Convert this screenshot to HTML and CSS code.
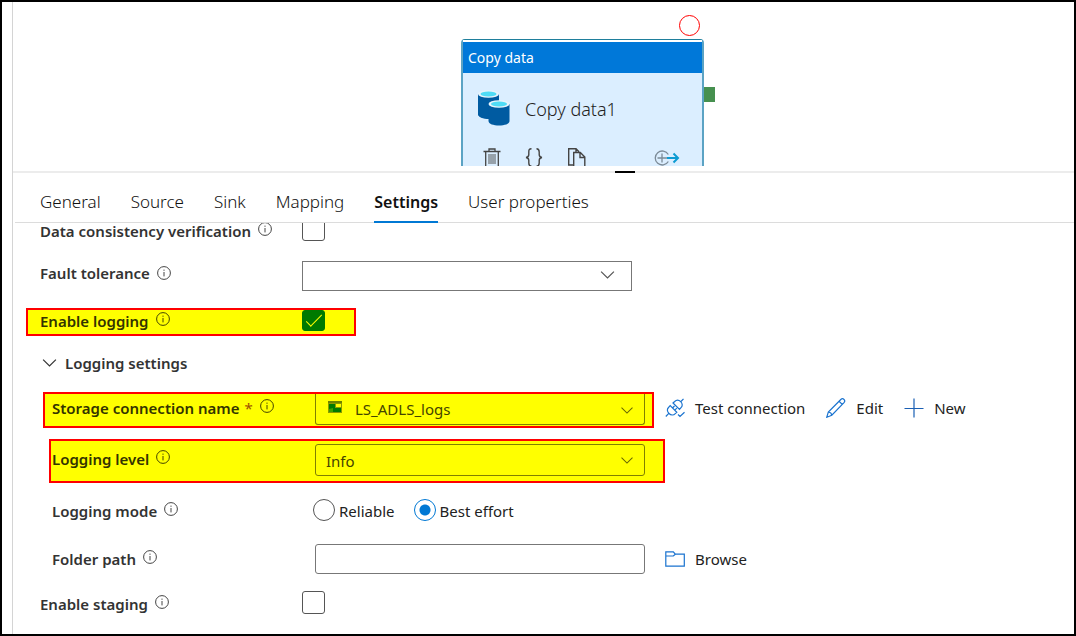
FILE: index.html
```html
<!DOCTYPE html>
<html lang="en">
<head>
<meta charset="utf-8">
<meta name="viewport" content="width=device-width, initial-scale=1">
<title>Copy data – Settings</title>
<link rel="stylesheet" href="styles.css">
</head>
<body>
<svg class="defs" aria-hidden="true">
  <symbol id="i-info" viewBox="0 0 14 14"><circle cx="7" cy="7" r="6.4" fill="none" stroke="currentColor"/><path d="M7 6v4.4M7 3.6v1.2" stroke="currentColor" fill="none"/></symbol>
  <symbol id="i-chevron" viewBox="0 0 14 8"><path d="M.6.6 7 7 13.400.6" fill="none" stroke="currentColor" stroke-width="1.2"/></symbol>
</svg>
<div class="frame">
  <main class="editor">
    <section class="canvas" aria-label="Pipeline canvas">
      <div class="node">
        <div class="node-type">Copy data</div>
        <div class="node-body">
          <svg class="node-icon" width="32" height="36" viewBox="0 0 32 36" aria-hidden="true">
            <path d="M0 4v20c0 3 5 5 11 5V4z" fill="#005ba1"/><path d="M0 4h21v9H11v15C5 28 0 27 0 24z" fill="#005ba1"/>
            <ellipse cx="10.500" cy="4" rx="10.500" ry="3.800" fill="#e8f4fb"/><ellipse cx="10.500" cy="4" rx="8" ry="2.500" fill="#50dcf5"/>
            <path d="M10.500 14v17c0 3 5 4.500 10.500 4.500S31.500 34 31.500 31V14z" fill="#005ba1"/>
            <ellipse cx="21" cy="14" rx="10.500" ry="3.800" fill="#e8f4fb"/><ellipse cx="21" cy="14" rx="8" ry="2.600" fill="#50dcf5"/>
          </svg>
          <span class="node-name">Copy data1</span>
        </div>
        <div class="node-tools">
          <button type="button" aria-label="Delete"><svg width="18" height="20" viewBox="0 0 18 20" fill="none" stroke="#444"><path stroke-width="1.300" d="M.5 3.500h17M6 3V1h6v2M2.700 3.500V19h12.600V3.500"/><path stroke-width=".9" d="M6 6v10M8 6v10M10 6v10M12 6v10"/></svg></button>
          <button type="button" aria-label="Code"><svg width="18" height="20" viewBox="0 0 18 20" fill="none" stroke="#444" stroke-width="1.400"><path d="M6.500.8C4 .8 3.800 2 3.800 4v2.500c0 2-1 2.800-2.800 3 1.800.2 2.800 1 2.800 3V15c0 2 .2 3.200 2.700 3.200M11.500.8c2.500 0 2.700 1.200 2.700 3.200v2.500c0 2 1 2.800 2.800 3-1.800.2-2.800 1-2.800 3V15c0 2-.2 3.200-2.700 3.200"/></svg></button>
          <button type="button" aria-label="Clone"><svg width="20" height="20" viewBox="0 0 20 20" fill="none" stroke="#444" stroke-width="1.400"><path d="M6 17H1.700V.8H9l3 3M6.700 19.500V4.500h6.600l4.500 4.500v10.500M13 4.500V9.500h5M9 .8V4"/></svg></button>
          <button type="button" class="tool-output" aria-label="Add output"><svg width="26" height="16" viewBox="0 0 26 16" fill="none"><path d="M14.300 4.500A7 7 0 1 0 14.300 11.500M3.500 8h9.500M8 3.500v9" stroke="#7b8a97" stroke-width="1.300"/><path d="M13 8h11M19.500 3.500 24 8l-4.500 4.500" stroke="#0d9bd2" stroke-width="2"/></svg></button>
        </div>
      </div>
      <span class="node-port"></span>
      <span class="node-status"></span>
    </section>
    <div class="splitter"><span class="splitter-handle"></span></div>
    <nav class="tabs">
      <a href="#general">General</a>
      <a href="#source">Source</a>
      <a href="#sink">Sink</a>
      <a href="#mapping">Mapping</a>
      <a href="#settings" class="active" aria-current="page">Settings</a>
      <a href="#user">User properties</a>
    </nav>
    <form class="settings">
      <div class="row row-consistency">
        <label class="name" for="consistency">Data consistency verification<svg class="info"><use href="#i-info"/></svg></label>
        <input class="check" type="checkbox" id="consistency">
      </div>
      <div class="row row-fault">
        <label class="name level" for="fault">Fault tolerance<svg class="info"><use href="#i-info"/></svg></label>
        <div class="select select-square"><select id="fault"><option></option></select><svg class="chevron"><use href="#i-chevron"/></svg></div>
      </div>
      <div class="row marked row-logging">
        <label class="name" for="logging">Enable logging<svg class="info"><use href="#i-info"/></svg></label>
        <input class="check" type="checkbox" id="logging" checked>
      </div>
      <button type="button" class="group" aria-expanded="true"><svg class="group-chevron"><use href="#i-chevron"/></svg>Logging settings</button>
      <div class="line">
        <div class="row marked row-storage">
          <label class="name" for="storage">Storage connection name <span class="required">*</span><svg class="info"><use href="#i-info"/></svg></label>
          <div class="select select-storage">
            <svg class="storage-icon" width="14" height="12" viewBox="0 0 14 12" aria-hidden="true"><path fill="#8c9a00" d="M0 0h14v12H0z"/><path fill="#6f8200" d="M0 0h14v2H0z"/><path fill="#007a00" d="M1 3h6v4H1zM1 7h12v4H1z"/><path fill="#ff0" d="M8 3h5v3H8z"/><path fill="#3da000" d="M1 8l4-1v4H1z"/></svg>
            <select id="storage"><option>LS_ADLS_logs</option></select><svg class="chevron"><use href="#i-chevron"/></svg>
          </div>
        </div>
        <div class="actions">
          <button type="button"><svg width="20" height="20" viewBox="0 0 20 20" fill="none" stroke="#1a73cf" stroke-width="1.200"><path d="M.8 18.500 4 15.200M15.500 4 18.500.8M4 15.500c-2-2-2.200-4.500-.3-6.300L5.200 7.700l6.600 6.600-1.500 1.300c-1.800 1.900-4.300 1.900-6.300-.1zM8 5l1.700-1.500c1.800-1.800 4.200-1.600 6 .2 1.900 1.900 2 4.300.3 6L14.500 11.400zM7.500 10l2-2M9.800 12.200l2-2M13 16.500l2 2 4.500-4.200"/></svg>Test connection</button>
          <button type="button"><svg width="20" height="20" viewBox="0 0 20 20" fill="none" stroke="#1a73cf" stroke-width="1.200"><path d="M.8 19.200 2.300 14 14.800 1.500c1-.9 2.300-.9 3.200 0s.9 2.200 0 3.200L5.800 17.200zM2.300 14c1.800.2 3.200 1.400 3.500 3.200M13 3.300l3.500 3.300"/></svg>Edit</button>
          <button type="button"><svg width="20" height="20" viewBox="0 0 20 20" fill="none" stroke="#1a5fb4" stroke-width="1.200"><path d="M.5 10.500h19M10 .5v19"/></svg>New</button>
        </div>
      </div>
      <div class="row marked row-level">
        <label class="name" for="level">Logging level<svg class="info"><use href="#i-info"/></svg></label>
        <div class="select"><select id="level"><option>Info</option></select><svg class="chevron"><use href="#i-chevron"/></svg></div>
      </div>
      <div class="row nested row-mode" role="radiogroup" aria-labelledby="mode">
        <span class="name" id="mode">Logging mode<svg class="info"><use href="#i-info"/></svg></span>
        <label class="choice"><input type="radio" name="mode">Reliable</label>
        <label class="choice"><input type="radio" name="mode" checked>Best effort</label>
      </div>
      <div class="row nested row-folder">
        <label class="name" for="folder">Folder path<svg class="info"><use href="#i-info"/></svg></label>
        <input class="text" type="text" id="folder">
        <div class="actions">
          <button type="button"><svg width="20" height="16" viewBox="0 0 20 16" fill="none" stroke="#1a73cf" stroke-width="1.200"><path d="M.8.8h7.500l2 2.400h9v12H.8zM.8 5h7.500l2-1.800"/></svg>Browse</button>
        </div>
      </div>
      <div class="row row-staging">
        <label class="name" for="staging">Enable staging<svg class="info"><use href="#i-info"/></svg></label>
        <input class="check" type="checkbox" id="staging">
      </div>
    </form>
  </main>
</div>
</body>
</html>
```
FILE: styles.css
```css
* { box-sizing: border-box; }
body {
  margin: 0;
  font-family: "Noto Sans", "Open Sans", sans-serif;
  font-size: 15px;
  line-height: 20px;
  color: #222;
  background: #fff;
}
button, input, select { font: inherit; color: inherit; margin: 0; }
button { display: flex; align-items: center; padding: 0; border: 0; background: none; }
svg { flex: none; }
.defs { position: absolute; width: 0; height: 0; }

.frame {
  min-height: 100vh;
  display: flex;
  padding-left: 10px;
  border: 2px solid #000;
}
.editor { flex: 1; min-width: 0; border-left: 1px solid #d4d4d4; }

/* Canvas: nodes sit at free coordinates */
.canvas { position: relative; height: 164px; overflow: hidden; }
.node {
  position: absolute;
  left: 448px;
  top: 37px;
  width: 243px;
  height: 160px;
  border: 2px solid #5ba3c4;
  border-top: 1px solid #1f7f9c;
  border-radius: 4px;
  background: #dbeeff;
}
.node-type {
  height: 33px;
  padding: 2px 5px 0;
  border-top: 2px solid #fff;
  line-height: 28px;
  font-size: 14px;
  color: #fff;
  background: #0078d9;
}
.node-body { display: flex; align-items: center; gap: 15px; padding: 17px 15px 0; }
.node-name { padding-top: 2px; font-size: 18px; font-weight: 300; }
.node-tools { display: flex; align-items: flex-start; gap: 24px; padding: 22px 20px 0; }
.tool-output { margin: 2px 2px 0 auto; }
.node-port { position: absolute; left: 691px; top: 85px; width: 11px; height: 15px; background: #46904f; }
.node-status { position: absolute; left: 666px; top: 13px; width: 21px; height: 21px; border: 1px solid #f00; border-radius: 50%; }

.splitter { margin-top: 5px; height: 2px; background: #ececec; }
.splitter-handle { display: block; width: 20px; height: 2px; margin-left: 602px; background: #000; }

.tabs {
  display: flex;
  gap: 30px;
  height: 50px;
  margin-left: 2px;
  padding-left: 25px;
  border-bottom: 1px solid #dcdcdc;
}
.tabs a {
  height: 50px;
  padding-top: 17px;
  line-height: 24px;
  font-size: 17px;
  font-weight: 300;
  color: #111;
  text-decoration: none;
}
.tabs .active { font-size: 16px; font-weight: 600; border-bottom: 2px solid #0078d4; }

.settings { overflow: hidden; }
.row { display: flex; align-items: center; margin-left: 27px; }
.nested { margin-left: 39px; }
.line { display: flex; align-items: center; }
.name { display: flex; align-items: center; flex: 0 0 262px; font-weight: 600; color: #333; white-space: nowrap; }
.info { width: 14px; height: 14px; margin: 0 0 4px 7px; color: #444; }
.level .info { margin-bottom: 0; }
.required { margin-left: 5px; font-weight: 400; color: #a05000; }
.marked { border: 2px solid #f00; background: #ff0; }
.marked .info, .marked select { color: #444400; }
.marked .name { color: #333300; }

.check {
  appearance: none;
  width: 23px;
  height: 23px;
  border: 1px solid #555;
  border-radius: 3px;
  background: #fff;
}
.check:checked { position: relative; border-color: #007a00; background: #007a00; }
.check:checked::after {
  content: "";
  position: absolute;
  left: 3px;
  top: 4px;
  width: 15px;
  height: 6px;
  border: solid #ff0;
  border-width: 0 0 1px 1px;
  transform: rotate(-45deg);
}

.select { position: relative; flex: 0 1 330px; }
.select select {
  appearance: none;
  display: block;
  width: 100%;
  height: 32px;
  padding: 2px 40px 0 10px;
  border: 1px solid #777;
  border-radius: 3px;
  background: none;
}
.select .chevron { position: absolute; right: 12px; top: 13px; width: 12px; height: 7px; color: #555; pointer-events: none; }
.marked .select select { border-color: #808000; }
.marked .select .chevron { color: #666600; }
.select-square select { height: 30px; border-radius: 0; }
.select-square .chevron { right: 17px; top: 10px; width: 15px; height: 8px; }
.storage-icon { position: absolute; left: 13px; top: 7px; }
.marked .select-storage select { height: 31px; padding: 0 40px 0 39px; border-top: 0; border-radius: 0 0 3px 3px; }
.text { flex: 0 1 330px; min-width: 0; height: 30px; padding: 0 10px; border: 1px solid #777; border-radius: 3px; background: #fff; }

.actions { display: flex; gap: 21px; white-space: nowrap; }
.actions button { gap: 10px; }

.choice { display: flex; align-items: center; gap: 4px; margin-right: 19px; }
.choice input { appearance: none; width: 22px; height: 22px; margin-bottom: 2px; border: 1px solid #555; border-radius: 50%; background: #fff; }
.choice input:checked { border-color: #0078d4; background: radial-gradient(circle, #0078d4 5px, #fff 6px); }

.row-consistency { margin-top: -5px; height: 23px; }
.row-consistency .name { padding-top: 3px; line-height: 16px; }
.row-fault { margin-top: 20px; }
.row-fault .name { padding-bottom: 6px; }
.row-logging { width: 330px; max-width: 100%; height: 28px; margin: 17px 0 0 13px; padding-left: 12px; }
.row-logging .name { padding-bottom: 2px; }
.row-logging .check { height: 21px; margin-bottom: 3px; }
.group { gap: 8px; margin: 17px 0 0 29px; font-weight: 600; color: #333; }
.group-chevron { width: 15px; height: 8px; }
.row-storage { flex: 0 1 611px; height: 36px; margin-left: 30px; padding: 0 7px; align-items: flex-start; }
.row-storage .name, .row-level .name { flex-basis: 263px; }
.row-storage .name { padding-top: 4px; }
.line { margin-top: 19px; gap: 11px; }
.line .actions { padding-bottom: 4px; }
.row-level { width: 616px; max-width: 100%; margin: 11px 0 0 36px; padding: 3px 18px 5px 1px; }
.row-level .name { padding-bottom: 2px; }
.row-mode { margin-top: 16px; }
.row-mode .name { flex-basis: 261px; }
.row-folder { margin-top: 21px; }
.row-folder .name { flex-basis: 263px; }
.row-folder .actions { margin-left: 20px; }
.row-staging { margin-top: 17px; margin-bottom: 18px; }
.row-staging .name { padding-top: 2px; }
```
